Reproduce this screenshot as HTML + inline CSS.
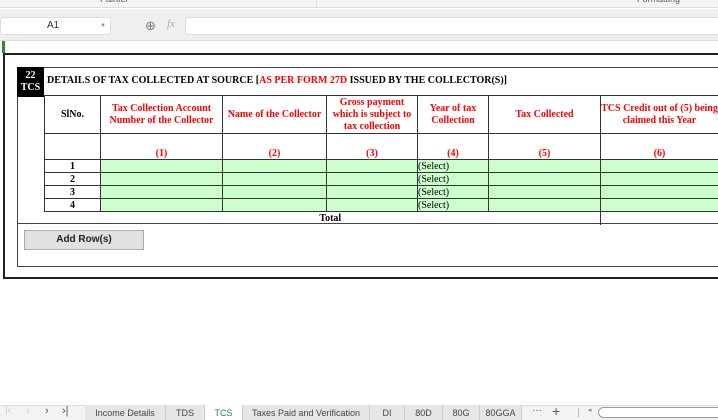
<!DOCTYPE html>
<html><head><meta charset="utf-8"><style>
*{margin:0;padding:0;box-sizing:border-box}
body{width:718px;height:420px;overflow:hidden;background:#fff;position:relative;font-family:"Liberation Serif",serif}
.a{position:absolute}
td{border:1px solid #333;padding:0}
.h{color:#f00;font-weight:bold;font-size:10px;text-align:center;vertical-align:middle;line-height:12px}
.g{background:#ccffcc}
.tab{position:absolute;top:405px;height:15px;font:9px "Liberation Sans",sans-serif;color:#444;display:flex;align-items:center;justify-content:center;background:#e6e6e6;border-right:1px solid #ccc}
</style></head><body>
<div class="a" style="left:0;top:0;width:718px;height:8px;background:#f5f5f5;border-bottom:1px solid #ddd"></div>
<div class="a" style="left:118px;top:0;width:1px;height:8px;background:#ddd"></div>
<div class="a" style="left:316px;top:0;width:1px;height:8px;background:#ddd"></div>
<div class="a" style="left:100px;top:-6px;font:9px 'Liberation Sans',sans-serif;color:#555">Painter</div>
<div class="a" style="left:637px;top:-6px;font:9px 'Liberation Sans',sans-serif;color:#555">Formatting</div>
<div class="a" style="left:0;top:9px;width:718px;height:32px;background:#efefef;border-bottom:1px solid #ddd"></div>
<div class="a" style="left:0;top:17px;width:111px;height:18px;background:#fff;border:1px solid #ddd;border-radius:3px;font:10px 'Liberation Sans',sans-serif;color:#333;padding-left:46px;line-height:16px">A1<span style="position:absolute;right:4px;font-size:6px;color:#888">▼</span></div>
<div class="a" style="left:145px;top:18px;font:13px 'Liberation Sans',sans-serif;color:#777">⊕</div>
<div class="a" style="left:167px;top:18px;font:italic 11px 'Liberation Serif',serif;color:#aaa">fx</div>
<div class="a" style="left:185px;top:17px;width:540px;height:18px;background:#fff;border:1px solid #ddd;border-radius:3px"></div>
<div class="a" style="left:2px;top:41px;width:3px;height:12px;background:#2e8b3e"></div>
<div class="a" style="left:3px;top:53px;width:720px;height:226px;border:2px solid #222;border-right:none"></div>
<div class="a" style="left:17px;top:67px;width:706px;height:200px;border:1px solid #444;border-right:none"></div>
<div class="a" style="left:17px;top:67px;width:27px;height:30px;background:#000;color:#fff;font-weight:bold;font-size:10px;text-align:center;line-height:12px;padding-top:3px">22<br>TCS</div>
<div class="a" style="left:47px;top:75px;font-weight:bold;font-size:10px;white-space:nowrap">DETAILS OF TAX COLLECTED AT SOURCE [<span style="color:#f00">AS PER FORM 27D</span> ISSUED BY THE COLLECTOR(S)]</div>
<div class="a" style="left:17px;top:223px;width:706px;height:1px;background:#444"></div>
<table class="a" style="left:44px;top:95px;width:686px;border-collapse:collapse;font-size:10px;font-weight:bold;table-layout:fixed">
<colgroup><col style="width:56px"><col style="width:122px"><col style="width:104px"><col style="width:91px"><col style="width:71px"><col style="width:112px"><col style="width:130px"></colgroup>
<tr style="height:38px"><td style="text-align:center">SlNo.</td><td class="h">Tax Collection Account<br>Number of the Collector</td><td class="h">Name of the Collector</td><td class="h">Gross payment which is subject to tax collection</td><td class="h">Year of tax<br>Collection</td><td class="h">Tax Collected</td><td class="h" style="padding-right:12px">TCS Credit out of (5) being claimed this Year</td></tr>
<tr style="height:26px;color:#f00;text-align:center;vertical-align:bottom"><td></td><td>(1)</td><td>(2)</td><td>(3)</td><td>(4)</td><td>(5)</td><td style="padding-right:12px">(6)</td></tr>
<tr style="height:13px;line-height:11px"><td style="text-align:center">1</td><td class="g"></td><td class="g"></td><td class="g"></td><td class="g" style="font-weight:normal">(Select)</td><td class="g"></td><td class="g"></td></tr>
<tr style="height:13px;line-height:11px"><td style="text-align:center">2</td><td class="g"></td><td class="g"></td><td class="g"></td><td class="g" style="font-weight:normal">(Select)</td><td class="g"></td><td class="g"></td></tr>
<tr style="height:13px;line-height:11px"><td style="text-align:center">3</td><td class="g"></td><td class="g"></td><td class="g"></td><td class="g" style="font-weight:normal">(Select)</td><td class="g"></td><td class="g"></td></tr>
<tr style="height:13px;line-height:11px"><td style="text-align:center">4</td><td class="g"></td><td class="g"></td><td class="g"></td><td class="g" style="font-weight:normal">(Select)</td><td class="g"></td><td class="g"></td></tr>
<tr style="height:13px;line-height:11px"><td colspan="6" style="border:none;text-align:center;padding-left:16px">Total</td><td style="border:none;border-left:1px solid #333;text-align:right;color:#06c;padding-right:4px">0</td></tr>
</table>
<div class="a" style="left:24px;top:230px;width:120px;height:20px;background:#e1e1e1;border:1px solid #adadad;font:bold 10px 'Liberation Sans',sans-serif;text-align:center;line-height:18px;color:#222">Add Row(s)</div>
<div class="a" style="left:0;top:405px;width:718px;height:15px;background:#f3f3f3;border-top:1px solid #ddd"></div>
<div class="a" style="left:5px;top:405px;font:10px 'Liberation Sans',sans-serif;color:#ccc">|‹</div>
<div class="a" style="left:26px;top:405px;font:11px 'Liberation Sans',sans-serif;color:#ccc">‹</div>
<div class="a" style="left:45px;top:405px;font:11px 'Liberation Sans',sans-serif;color:#555">›</div>
<div class="a" style="left:62px;top:405px;font:11px 'Liberation Sans',sans-serif;color:#555">›|</div>
<div class="tab" style="left:85px;width:81px">Income Details</div>
<div class="tab" style="left:166px;width:39px">TDS</div>
<div class="tab" style="left:205px;width:38px;background:#fff;color:#1e8f3a">TCS</div>
<div class="tab" style="left:243px;width:127px">Taxes Paid and Verification</div>
<div class="tab" style="left:370px;width:35px">DI</div>
<div class="tab" style="left:405px;width:38px">80D</div>
<div class="tab" style="left:443px;width:37px">80G</div>
<div class="tab" style="left:480px;width:42px">80GGA</div>
<div class="a" style="left:532px;top:405px;font:10px 'Liberation Sans',sans-serif;color:#555">···</div>
<div class="a" style="left:552px;top:403px;font:14px 'Liberation Sans',sans-serif;color:#555">+</div>
<div class="a" style="left:578px;top:408px;width:1px;height:9px;background:#bbb"></div>
<div class="a" style="left:588px;top:406px;font:7px 'Liberation Sans',sans-serif;color:#888">◂</div>
<div class="a" style="left:598px;top:407px;width:130px;height:11px;border:1px solid #999;border-radius:6px;background:#fff"></div>
</body></html>
